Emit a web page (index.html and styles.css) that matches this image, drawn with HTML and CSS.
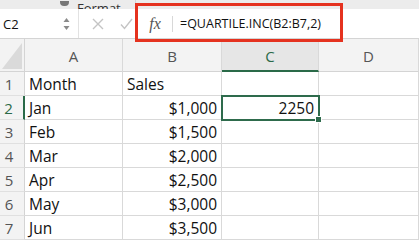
FILE: index.html
```html
<!DOCTYPE html>
<html lang="en">
<head>
  <meta charset="UTF-8" />
  <title>Quartile</title>
  <link rel="stylesheet" href="styles.css">
</head>
<body>
  <div class="sheet">
    <div class="ribbon">
      <span class="ribbon-icon"></span>
      <span class="ribbon-text">Format</span>
      <span class="ribbon-sep"></span>
    </div>

    <div class="formula-bar">
      <div class="namebox">
        <span class="name">C2</span>
        <span class="arrows">
          <svg width="7" height="14" viewBox="0 0 7 14"><path d="M0.5 5 L3.5 1 L6.5 5 Z M0.5 9 L3.5 13 L6.5 9 Z" fill="#8a8a8a"/></svg>
        </span>
      </div>
      <div class="actions">
        <svg width="12" height="12" viewBox="0 0 12 12"><path d="M1 1 L11 11 M11 1 L1 11" stroke="#c4c4c4" stroke-width="1.4"/></svg>
        <svg width="13" height="12" viewBox="0 0 13 12"><path d="M1 6.5 L4.5 10.5 L12 1" stroke="#c4c4c4" stroke-width="1.4" fill="none"/></svg>
      </div>
      <div class="fx">fx</div>
      <div class="formula">=QUARTILE.INC(B2:B7,2)</div>
      <div class="highlight-box"></div>
    </div>

    <div class="grid">
      <div class="corner"><span class="tri"></span></div>
      <div class="col-head">A</div>
      <div class="col-head">B</div>
      <div class="col-head active">C</div>
      <div class="col-head">D</div>

      <div class="row-head">1</div>
      <div class="cell">Month</div>
      <div class="cell">Sales</div>
      <div class="cell"></div>
      <div class="cell"></div>

      <div class="row-head active">2</div>
      <div class="cell">Jan</div>
      <div class="cell num">$1,000</div>
      <div class="cell num selected">2250<span class="handle"></span></div>
      <div class="cell"></div>

      <div class="row-head">3</div>
      <div class="cell">Feb</div>
      <div class="cell num">$1,500</div>
      <div class="cell"></div>
      <div class="cell"></div>

      <div class="row-head">4</div>
      <div class="cell">Mar</div>
      <div class="cell num">$2,000</div>
      <div class="cell"></div>
      <div class="cell"></div>

      <div class="row-head">5</div>
      <div class="cell">Apr</div>
      <div class="cell num">$2,500</div>
      <div class="cell"></div>
      <div class="cell"></div>

      <div class="row-head">6</div>
      <div class="cell">May</div>
      <div class="cell num">$3,000</div>
      <div class="cell"></div>
      <div class="cell"></div>

      <div class="row-head">7</div>
      <div class="cell">Jun</div>
      <div class="cell num">$3,500</div>
      <div class="cell"></div>
      <div class="cell"></div>
    </div>
  </div>
</body>
</html>
```

FILE: styles.css
```css
body {
  margin: 0;
  padding: 0;
  background: #fff;
  font-family: 'Open Sans', 'Liberation Sans', sans-serif;
  color: #111;
}
.sheet {
  width: 419px;
  height: 241px;
  overflow: hidden;
  position: relative;
}
.ribbon {
  height: 9px;
  background: #ececec;
  overflow: hidden;
  display: flex;
  align-items: flex-end;
  padding-left: 60px;
  gap: 8px;
}
.ribbon-icon {
  width: 9px;
  height: 5px;
  background: #777;
  border-radius: 0 0 4px 4px;
  margin-bottom: 3px;
}
.ribbon-text {
  font-size: 13px;
  line-height: 13px;
  color: #333;
  margin-bottom: -6px;
}
.ribbon-sep {
  width: 1px;
  height: 9px;
  background: #d6d6d6;
  margin-left: 6px;
}
.formula-bar {
  height: 29px;
  border-bottom: 1px solid #d4d4d4;
  display: flex;
  align-items: center;
  background: #fff;
  position: relative;
}
.namebox {
  width: 79px;
  height: 29px;
  display: flex;
  align-items: center;
  justify-content: space-between;
  padding: 0 8px 0 3px;
  box-sizing: border-box;
  border-right: 1px solid #e2e2e2;
}
.name {
  font-size: 13px;
}
.arrows {
  display: flex;
}
.actions {
  display: flex;
  align-items: center;
  gap: 16px;
  padding-left: 13px;
  width: 55px;
  box-sizing: border-box;
}
.fx {
  font-family: 'Liberation Serif', serif;
  font-style: italic;
  font-size: 16px;
  color: #555;
  width: 34px;
  text-align: center;
  margin-left: 4px;
  border-right: 1px solid #d8d8d8;
  line-height: 16px;
}
.formula {
  font-size: 12.5px;
  padding-left: 7px;
  color: #111;
}
.highlight-box {
  position: absolute;
  left: 135px;
  top: -6px;
  width: 208px;
  height: 39px;
  border: 3px solid #e5321f;
  box-sizing: border-box;
}
.grid {
  display: grid;
  grid-template-columns: 25px 98px 99px 97px 100px;
  grid-template-rows: 33px repeat(7, 24px);
}
.corner {
  background: #f3f3f3;
  border-right: 1px solid #d4d4d4;
  border-bottom: 1px solid #d4d4d4;
  position: relative;
}
.tri {
  position: absolute;
  right: 2px;
  bottom: 2px;
  width: 20px;
  height: 26px;
  background: #dadada;
  clip-path: polygon(100% 0, 100% 100%, 0 100%);
}
.col-head {
  background: #f3f3f3;
  border-right: 1px solid #d9d9d9;
  border-bottom: 1px solid #d4d4d4;
  display: flex;
  align-items: center;
  justify-content: center;
  font-size: 15px;
  color: #555;
  padding-top: 2px;
}
.col-head.active {
  background: #e6e6e6;
  color: #2a6a48;
  border-bottom: 2px solid #2a6a48;
}
.row-head {
  background: #f3f3f3;
  border-right: 1px solid #d4d4d4;
  border-bottom: 1px solid #e0e0e0;
  display: flex;
  align-items: center;
  justify-content: center;
  font-size: 15px;
  color: #555;
  padding-right: 6px;
}
.row-head.active {
  color: #2a6a48;
  border-right: 2px solid #2a6a48;
}
.cell {
  border-right: 1px solid #d9d9d9;
  border-bottom: 1px solid #d9d9d9;
  display: flex;
  align-items: center;
  font-size: 15.5px;
  padding: 0 4px;
  color: #111;
  position: relative;
}
.cell.num {
  justify-content: flex-end;
}
.cell.selected {
  outline: 2px solid #2e6b4c;
  outline-offset: -1px;
  z-index: 1;
}
.handle {
  position: absolute;
  right: -4px;
  bottom: -4px;
  width: 5px;
  height: 5px;
  background: #2e6b4c;
  border: 1px solid #fff;
}
```
